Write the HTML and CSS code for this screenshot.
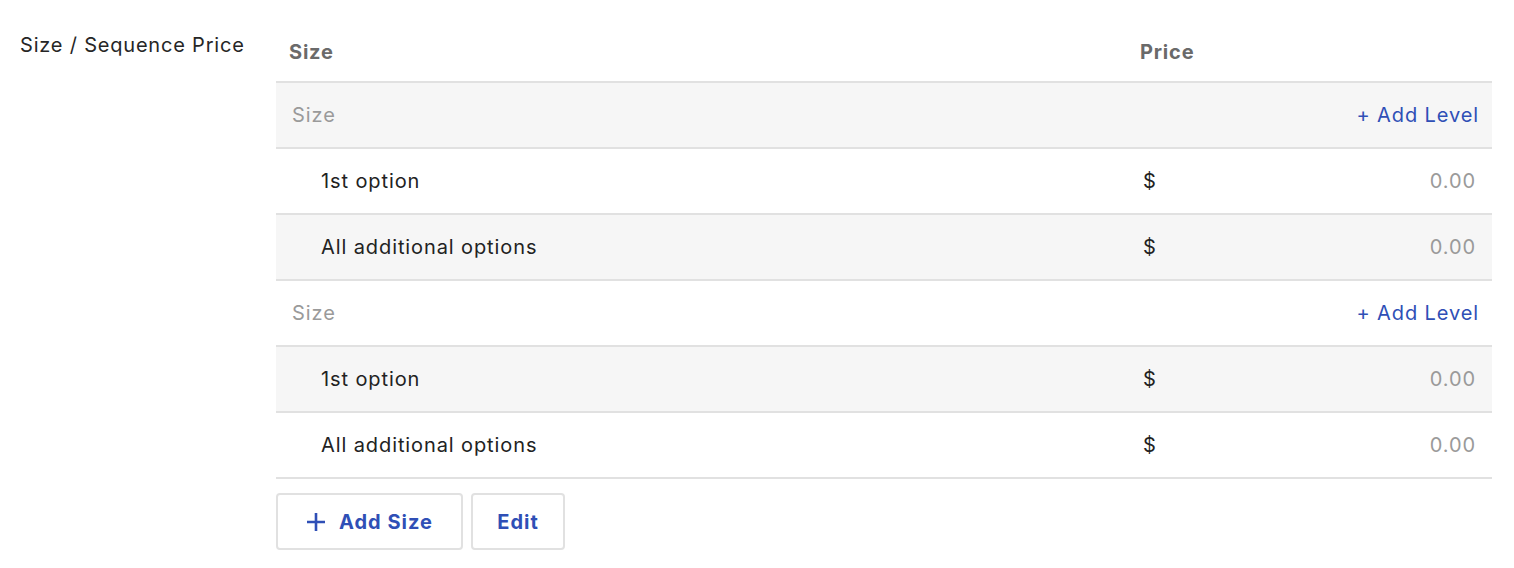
FILE: index.html
```html
<!DOCTYPE html>
<html>
<head>
<meta charset="utf-8">
<link rel="stylesheet" href="styles.css">
</head>
<body>
<div class="field">
  <div class="field-label">Size / Sequence Price</div>
  <div class="field-body">
    <div class="table">
      <div class="row head">
        <div class="cell c-name">Size</div>
        <div class="cell c-price">Price</div>
      </div>
      <div class="row group alt">
        <div class="cell g-name">Size</div>
        <div class="cell g-action"><span class="link">+ Add Level</span></div>
      </div>
      <div class="row option">
        <div class="cell o-name">1st option</div>
        <div class="cell o-price"><span class="cur">$</span><span class="val">0.00</span></div>
      </div>
      <div class="row option alt">
        <div class="cell o-name">All additional options</div>
        <div class="cell o-price"><span class="cur">$</span><span class="val">0.00</span></div>
      </div>
      <div class="row group">
        <div class="cell g-name">Size</div>
        <div class="cell g-action"><span class="link">+ Add Level</span></div>
      </div>
      <div class="row option alt">
        <div class="cell o-name">1st option</div>
        <div class="cell o-price"><span class="cur">$</span><span class="val">0.00</span></div>
      </div>
      <div class="row option">
        <div class="cell o-name">All additional options</div>
        <div class="cell o-price"><span class="cur">$</span><span class="val">0.00</span></div>
      </div>
    </div>
    <div class="actions">
      <button class="btn btn-add"><svg class="plus" width="20" height="20" viewBox="0 0 20 20"><path d="M10 1v18M1 10h18" stroke="currentColor" stroke-width="2.6" fill="none"/></svg>Add Size</button>
      <button class="btn btn-edit">Edit</button>
    </div>
  </div>
</div>
</body>
</html>
```

FILE: styles.css
```css
html, body {
  margin: 0;
  padding: 0;
  background: #ffffff;
}
body {
  font-family: "Inter", "Liberation Sans", sans-serif;
  font-size: 20px;
  letter-spacing: 0.9px;
  color: #222222;
}
.field {
  display: flex;
  padding: 22px 22px 0 20px;
}
.field-label {
  width: 256px;
  flex: none;
  padding-top: 11px;
  line-height: 24px;
  color: #262626;
  letter-spacing: 0.8px;
}
.field-body {
  width: 1216px;
}
.table {
  display: flex;
  flex-direction: column;
}
.row {
  display: grid;
  grid-template-columns: 851px 1fr;
  height: 64px;
  border-bottom: 2px solid #e1e1e1;
  align-items: center;
}
.row.alt {
  background: #f6f6f6;
}
.row.head {
  height: 59px;
}
.cell {
  line-height: 24px;
}
.c-name, .c-price {
  padding-left: 13px;
  font-weight: 700;
  color: #6a6a6a;
  letter-spacing: 0.8px;
}
.g-name {
  padding-left: 16px;
  color: #9a9a9a;
}
.g-action {
  text-align: right;
  padding-right: 13px;
}
.link {
  color: #2f4fb6;
}
.o-name {
  padding-left: 45px;
}
.o-price {
  display: flex;
  justify-content: space-between;
  padding-left: 16px;
  padding-right: 16px;
}
.val {
  color: #9a9a9a;
}
.actions {
  display: flex;
  gap: 8px;
  padding-top: 14px;
}
.btn {
  display: flex;
  align-items: center;
  justify-content: center;
  height: 57px;
  background: #ffffff;
  border: 2px solid #e1e1e1;
  border-radius: 4px;
  font-family: inherit;
  font-size: 20px;
  letter-spacing: 1px;
  font-weight: 700;
  color: #2f4fb6;
  padding: 0;
}
.btn-add {
  width: 187px;
  gap: 13px;
}
.btn-edit {
  width: 94px;
}
.plus {
  display: block;
}
```
